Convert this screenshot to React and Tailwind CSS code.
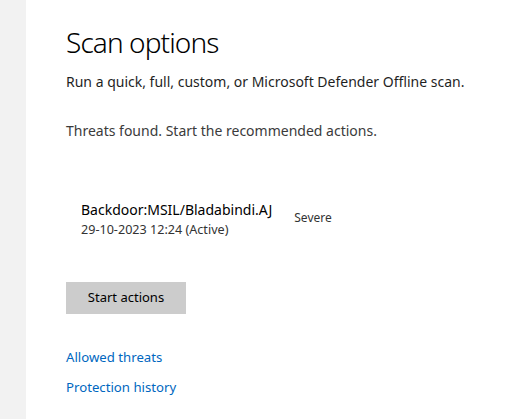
export default function App(){
  return(
    <div className="flex w-[519px] h-[419px] bg-white overflow-hidden font-['Noto_Sans',sans-serif]">
      {/* nav strip */}
      <div className="w-[26px] shrink-0 bg-[#f2f2f2]"></div>

      <div className="flex-1 pl-[40px] pt-[24px]">
        <h1 className="text-[28px] leading-[36px] font-light tracking-[-0.9px] text-black">Scan options</h1>
        <p className="mt-[12px] text-[14px] leading-[20px] text-[#1f1f1f]">Run a quick, full, custom, or Microsoft Defender Offline scan.</p>
        <p className="mt-[29px] text-[14px] leading-[20px] text-[#3b3b3b]">Threats found. Start the recommended actions.</p>

        <div className="mt-[59px] pl-[15px] flex items-start gap-[22px]">
          <div>
            <p className="text-[14px] leading-[20px] text-black">Backdoor:MSIL/Bladabindi.AJ</p>
            <p className="text-[12.6px] leading-[20px] text-[#333]">29-10-2023 12:24 (Active)</p>
          </div>
          <span className="mt-[10px] text-[12px] leading-[16px] text-[#333]">Severe</span>
        </div>

        <button className="mt-[42px] w-[120px] h-[32px] bg-[#cccccc] text-[13px] text-black">Start actions</button>

        <div className="mt-[33px] flex flex-col gap-[10px] text-[13.2px] leading-[20px] text-[#0067c0]">
          <a href="#">Allowed threats</a>
          <a href="#">Protection history</a>
        </div>
      </div>
    </div>
  );
}
